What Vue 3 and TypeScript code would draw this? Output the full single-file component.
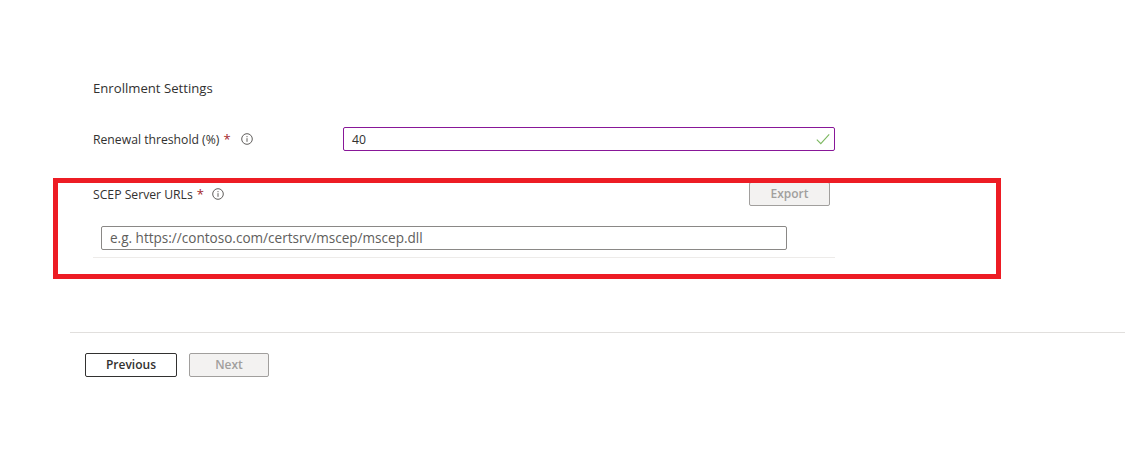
<script setup lang="ts">
const title = 'Enrollment Settings'
</script>

<template>
  <div class="page">
    <section class="form">
      <div class="heading">{{ title }}</div>
      <div class="row threshold">
        <div class="label">
          <span>Renewal threshold (%)</span><span class="req">*</span>
          <svg class="info" viewBox="0 0 12 12"><circle cx="6" cy="6" r="5.3" /><path d="M6 5.2v3.6M6 3.1v1.1" /></svg>
        </div>
        <div class="valid-input">
          <span>40</span>
          <svg class="check" viewBox="0 0 14 12"><path d="M0.8 6.6l4 4L13.2 1.4" /></svg>
        </div>
      </div>
      <div class="urls">
        <div class="urls-head">
          <div class="label scep">
            <span>SCEP Server URLs</span><span class="req">*</span>
            <svg class="info" viewBox="0 0 12 12"><circle cx="6" cy="6" r="5.3" /><path d="M6 5.2v3.6M6 3.1v1.1" /></svg>
          </div>
          <button class="btn disabled export" disabled>Export</button>
        </div>
        <div class="url-input">e.g. https://contoso.com/certsrv/mscep/mscep.dll</div>
      </div>
    </section>
    <footer class="footer">
      <button class="btn prev">Previous</button>
      <button class="btn disabled next" disabled>Next</button>
    </footer>
    <div class="highlight"></div>
  </div>
</template>

<style>
html, body { margin: 0; background: #fff; }
</style>

<style scoped>
.page {
  position: relative;
  width: 1125px;
  height: 464px;
  overflow: hidden;
  background: #fff;
  font-family: "Open Sans", "Noto Sans", sans-serif;
  font-size: 12.2px;
  color: #323130;
}
.form {
  width: 742px;
  margin-left: 93px;
  padding-top: 79px;
}
.heading { height: 18px; line-height: 18px; font-size: 13.15px; }
.row { display: flex; align-items: center; }
.threshold { margin-top: 30px; }
.label { display: flex; align-items: center; white-space: nowrap; }
.threshold .label { width: 250px; }
.req { color: #a4262c; margin-left: 4px; font-size: 13px; }
.info { width: 12px; height: 12px; margin-left: 10px; }
.scep .info { margin-left: 8px; }
.info circle, .info path { fill: none; stroke: #605e5c; stroke-width: 1; }
.valid-input {
  flex: 1;
  box-sizing: border-box;
  height: 24px;
  border: 1px solid #881798;
  border-radius: 2px;
  padding: 0 4px 0 8px;
  display: flex;
  align-items: center;
  justify-content: space-between;
}
.check { width: 14px; height: 12px; }
.check path { fill: none; stroke: #7cb860; stroke-width: 1.1; }
.urls { margin-top: 31px; height: 75px; border-bottom: 1px solid #edebe9; }
.urls-head { display: flex; justify-content: space-between; align-items: center; padding-right: 5px; height: 24px; }
.url-input {
  box-sizing: border-box;
  width: 686px;
  height: 24px;
  margin: 20px 0 0 8px;
  padding-left: 8px;
  border: 1px solid #8a8886;
  border-radius: 2px;
  line-height: 22px;
  font-size: 13.55px;
  color: #605e5c;
}
.footer {
  margin: 74px 0 0 70px;
  border-top: 1px solid #e1dfdd;
  padding: 20px 0 0 15px;
  display: flex;
  gap: 12px;
}
.btn {
  box-sizing: border-box;
  height: 24px;
  padding: 0;
  border-radius: 2px;
  font-family: inherit;
  font-size: 12px;
  font-weight: 600;
  line-height: 22px;
  background: #fff;
  border: 1px solid #323130;
  color: #323130;
}
.btn.disabled { background: #f3f2f1; border-color: #a19f9d; color: #a19f9d; }
.export { width: 81px; }
.prev { width: 92px; }
.next { width: 80px; }
.highlight {
  position: absolute;
  left: 53px;
  top: 178px;
  width: 948px;
  height: 101px;
  box-sizing: border-box;
  border: 5px solid #ed1c24;
}
</style>
